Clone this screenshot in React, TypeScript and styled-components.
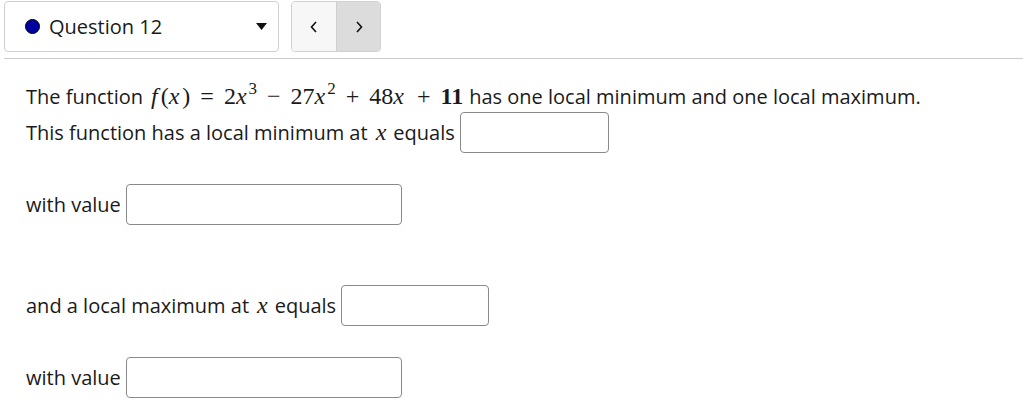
import React from "react";
import styled, { createGlobalStyle } from "styled-components";

const Global = createGlobalStyle`
  html, body { margin: 0; padding: 0; background: #fff; }
  body { font-family: "Open Sans", "Noto Sans", sans-serif; color: #1a1a1a; }
`;

const Page = styled.div`
  width: 1023px;
  height: 408px;
  overflow: hidden;
  box-sizing: border-box;
  padding-top: 1px;
`;

const Header = styled.div`
  display: flex;
  align-items: stretch;
  gap: 12px;
  padding-left: 4px;
  height: 51px;
`;

const Select = styled.div`
  width: 275px;
  box-sizing: border-box;
  border: 1px solid #d0d0d0;
  border-radius: 4px;
  display: flex;
  align-items: center;
  padding: 0 11px 0 20px;
  font-size: 20px;
`;

const Dot = styled.span`
  width: 15px;
  height: 15px;
  border-radius: 50%;
  background: #0000a0;
  border: 1.5px solid #000;
  box-sizing: border-box;
  margin-right: 9px;
`;

const Label = styled.span`
  flex: 1;
`;

const NavGroup = styled.div`
  display: flex;
  border: 1px solid #d0d0d0;
  border-radius: 4px;
  overflow: hidden;
`;

const NavButton = styled.button<{ $active?: boolean }>`
  width: 44px;
  border: none;
  padding: 0;
  margin: 0;
  background: ${(p) => (p.$active ? "#dcdcdc" : "#f7f7f7")};
  border-left: ${(p) => (p.$active ? "1px solid #cfcfcf" : "none")};
  display: flex;
  align-items: center;
  justify-content: center;
`;

const Rule = styled.div`
  margin: 6px 0 0 4px;
  height: 1px;
  background: #cccccc;
`;

const Content = styled.div`
  padding: 24px 0 0 26px;
  font-size: 20px;
  line-height: 27px;
`;

const Line = styled.div<{ $mt?: number }>`
  display: flex;
  align-items: center;
  white-space: nowrap;
  margin-top: ${(p) => p.$mt ?? 0}px;
`;

const Math = styled.span`
  font-family: "Liberation Serif", "DejaVu Serif", serif;
  font-size: 24px;
  margin: 0 6px 0 8px;
`;

const MI = styled.i<{ $gap?: number }>`
  margin-right: ${(p) => p.$gap ?? 0}px;
`;

const Var = styled.i`
  font-family: "Liberation Serif", "DejaVu Serif", serif;
  font-style: italic;
  font-size: 24px;
  margin: 0 7px 0 8px;
`;

const Op = styled.span`
  margin: 0 10px;
`;

const Sup = styled.sup`
  font-size: 17px;
  vertical-align: 10px;
  line-height: 0;
  margin-left: 1px;
`;

const Input = styled.input<{ $w: number }>`
  width: ${(p) => p.$w}px;
  height: 41px;
  box-sizing: border-box;
  border: 1px solid #8a8a8a;
  border-radius: 4px;
  margin-left: 5px;
  padding: 0;
`;

const Caret = () => (
  <svg width="11" height="7" viewBox="0 0 11 7">
    <path d="M0 0 L11 0 L5.5 7 Z" fill="#111" />
  </svg>
);

const Chevron = ({ dir }: { dir: "l" | "r" }) => (
  <svg width="8" height="12" viewBox="0 0 8 12">
    <path
      d={dir === "l" ? "M6 1 L1.5 6 L6 11" : "M2 1 L6.5 6 L2 11"}
      fill="none"
      stroke="#111"
      strokeWidth="1.6"
    />
  </svg>
);

export default function App() {
  return (
    <Page>
      <Global />
      <Header>
        <Select>
          <Dot />
          <Label>Question 12</Label>
          <Caret />
        </Select>
        <NavGroup>
          <NavButton>
            <Chevron dir="l" />
          </NavButton>
          <NavButton $active>
            <Chevron dir="r" />
          </NavButton>
        </NavGroup>
      </Header>
      <Rule />
      <Content>
        <Line>
          The function
          <Math>
            <MI $gap={3}>f</MI>(<MI $gap={3}>x</MI>)<Op>=</Op>2<MI $gap={1}>x</MI>
            <Sup>3</Sup>
            <Op>−</Op>27<MI $gap={1}>x</MI>
            <Sup>2</Sup>
            <Op>+</Op>48<MI $gap={3}>x</MI>
            <Op>+</Op>
            <b>11</b>
          </Math>
          has one local minimum and one local maximum.
        </Line>
        <Line $mt={2}>
          This function has a local minimum at
          <Var>x</Var>
          equals
          <Input $w={149} />
        </Line>
        <Line $mt={31}>
          with value
          <Input $w={276} />
        </Line>
        <Line $mt={60}>
          and a local maximum at
          <Var>x</Var>
          equals
          <Input $w={148} />
        </Line>
        <Line $mt={31}>
          with value
          <Input $w={276} />
        </Line>
      </Content>
    </Page>
  );
}
